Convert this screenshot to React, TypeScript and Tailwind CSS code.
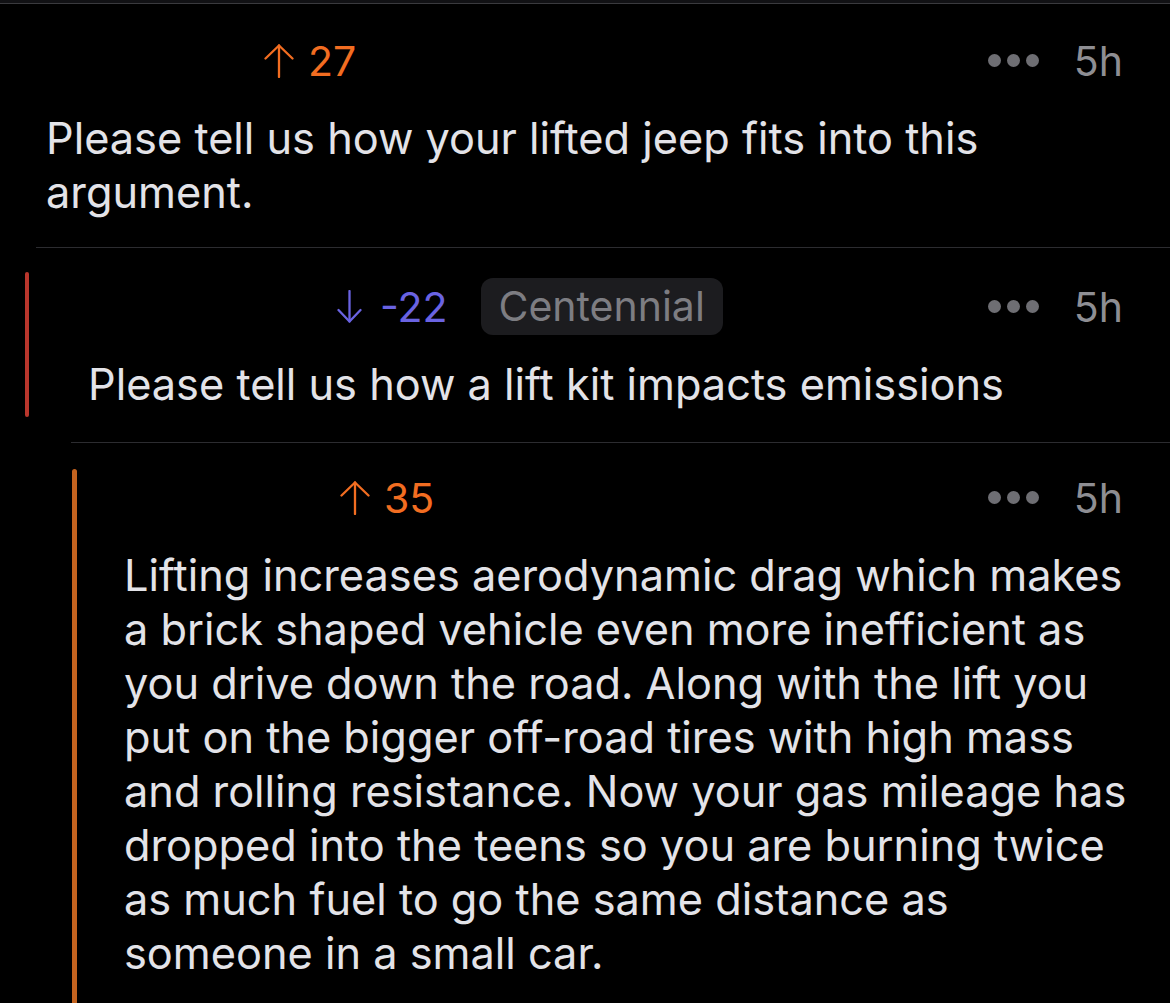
import React from 'react'

type Vote = 'up' | 'down'

const UpArrow = ({ className }: { className?: string }) => (
  <svg viewBox="0 0 30 34" className={className} fill="none" stroke="currentColor" strokeWidth={2.3} strokeLinecap="round" strokeLinejoin="round">
    <polyline points="1.5,14.5 15,1.5 28.5,14.5" />
    <line x1="15" y1="1.5" x2="15" y2="33" />
  </svg>
)

const DownArrow = ({ className }: { className?: string }) => (
  <svg viewBox="0 0 25 33" className={className} fill="none" stroke="currentColor" strokeWidth={2.3} strokeLinecap="round" strokeLinejoin="round">
    <polyline points="1.5,20 12.5,31.5 23.5,20" />
    <line x1="12.5" y1="1" x2="12.5" y2="31.5" />
  </svg>
)

const Meta = () => (
  <div className="ml-auto flex items-center gap-[35px]">
    <div className="flex items-center gap-[6px]">
      <span className="block size-[13px] rounded-full bg-[#6e6e73]" />
      <span className="block size-[13px] rounded-full bg-[#6e6e73]" />
      <span className="block size-[13px] rounded-full bg-[#6e6e73]" />
    </div>
    <span className="text-[#8e8e93]">5h</span>
  </div>
)

const Score = ({ vote, score }: { vote: Vote; score: string }) =>
  vote === 'up' ? (
    <div className="flex items-center gap-[14px] text-[#f26d21]">
      <UpArrow className="h-[34px] w-[30px]" />
      <span>{score}</span>
    </div>
  ) : (
    <div className="flex items-center gap-[18px] text-[#6a63e2]">
      <DownArrow className="h-[33px] w-[25px]" />
      <span>{score}</span>
    </div>
  )

export default function App() {
  return (
    <div
      className="min-h-[1003px] w-full overflow-hidden bg-black text-[41px] leading-[54px] text-[#e3e3e8]"
      style={{ fontFamily: 'Inter, "Noto Sans", sans-serif' }}
    >
      <div className="h-[3px] bg-[#111114]" />
      <div className="h-[1px] bg-[#3a3a3e]" />

      {/* comment 1 */}
      <div className="pl-[46px] pr-[47px] pt-[28px] pb-[28px]">
        <div className="flex h-[57px] items-center">
          <div className="ml-[218px]">
            <Score vote="up" score="27" />
          </div>
          <Meta />
        </div>
        <p className="mt-[22px] text-[43.3px]">Please tell us how your lifted jeep fits into this argument.</p>
      </div>

      <div className="ml-[36px] h-[1px] bg-[#2c2c30]" />

      {/* comment 2 */}
      <div className="flex pl-[25px] pr-[47px] pt-[24px] pb-[25px]">
        <div className="w-[4px] shrink-0 rounded-full bg-[#b9362c]" />
        <div className="flex-1 py-[6px] pl-[59px]">
          <div className="flex h-[57px] items-center">
            <div className="ml-[249px] flex items-center gap-[33px]">
              <Score vote="down" score="-22" />
              <span className="rounded-[12px] bg-[#1c1c1f] px-[18px] leading-[57px] text-[#7d7d82]">Centennial</span>
            </div>
            <Meta />
          </div>
          <p className="mt-[22px] text-[43.3px]">Please tell us how a lift kit impacts emissions</p>
        </div>
      </div>

      <div className="ml-[71px] h-[1px] bg-[#2c2c30]" />

      {/* comment 3 */}
      <div className="flex pl-[72px] pr-[47px] pt-[26px]">
        <div className="w-[5px] shrink-0 rounded-t-full bg-[#c4631f]" />
        <div className="flex-1 pb-[30px] pl-[47px]">
          <div className="flex h-[57px] items-center">
            <div className="ml-[216px]">
              <Score vote="up" score="35" />
            </div>
            <Meta />
          </div>
          <p className="mr-[-12px] mt-[22px] text-[43.3px]">
            Lifting increases aerodynamic drag which makes a brick shaped vehicle even more inefficient as you drive down
            the road. Along with the lift you put on the bigger off-road tires with high mass and rolling resistance. Now
            your gas mileage has dropped into the teens so you are burning twice as much fuel to go the same distance as
            someone in a small car.
          </p>
        </div>
      </div>
    </div>
  )
}
